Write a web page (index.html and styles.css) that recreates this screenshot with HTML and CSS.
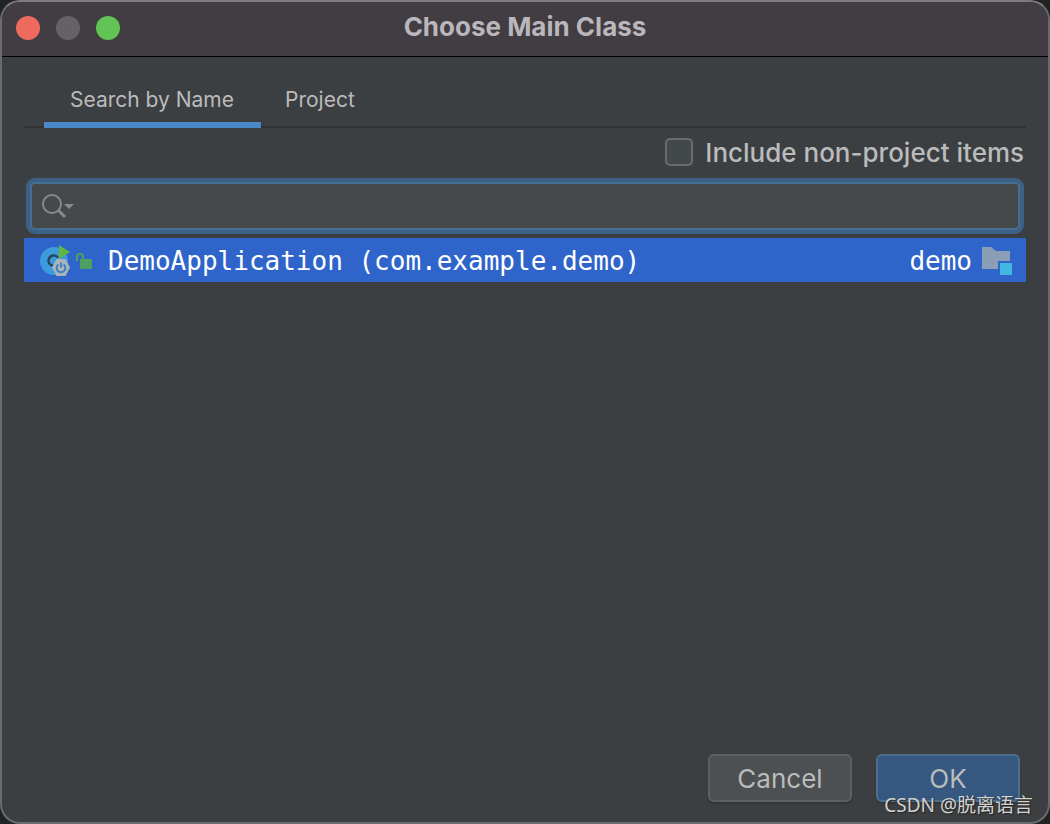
FILE: index.html
```html
<!DOCTYPE html>
<html lang="en">
<head>
  <meta charset="UTF-8" />
  <meta name="viewport" content="width=device-width, initial-scale=1.0" />
  <title>Choose Main Class</title>
  <link rel="stylesheet" href="styles.css">
</head>
<body>
  <div class="dialog">
    <header class="titlebar">
      <div class="lights">
        <button class="light close" aria-label="Close"></button>
        <button class="light minimize" aria-label="Minimize" disabled></button>
        <button class="light maximize" aria-label="Zoom"></button>
      </div>
      <h1>Choose Main Class</h1>
    </header>

    <main class="content">
      <nav class="tabs">
        <a class="tab active" href="#search">Search by Name</a>
        <a class="tab" href="#project">Project</a>
      </nav>

      <div class="options">
        <input type="checkbox" id="nonProject" />
        <label for="nonProject">Include non-project items</label>
      </div>

      <div class="search">
        <svg class="search-icon" width="34" height="26" viewBox="0 0 34 26" aria-hidden="true">
          <circle cx="11" cy="11" r="9" fill="none" stroke="#868a8d" stroke-width="2" />
          <path d="M17.500 17.500L24 24" stroke="#868a8d" stroke-width="3" />
          <path d="M23 11h10l-5 5z" fill="#868a8d" />
        </svg>
        <input type="text" aria-label="Search by name" />
      </div>

      <ul class="results">
        <li class="result selected">
          <!-- runnable Spring class -->
          <svg width="32" height="32" viewBox="0 0 32 32" aria-hidden="true">
            <circle cx="14" cy="16" r="14" fill="#3c9bdc" />
            <path d="M18 12.500A5.300 5.300 0 1 0 14 21" fill="none" stroke="#26455c" stroke-width="2.400" />
            <path d="M19 0l11 7-11 7z" fill="#62b543" />
            <path d="M16.500 14h9l4.500 8.500-4.500 8.500h-9l-4.500-8.500z" fill="#a9b4bd" />
            <path d="M18.500 19.500a4.300 4.300 0 1 0 5 0M21 17.500v5" fill="none" stroke="#3d82c4" stroke-width="2" />
          </svg>
          <svg class="lock" width="18" height="18" viewBox="0 0 18 18" aria-hidden="true">
            <path d="M2 9V5a3 3 0 0 1 6 0v3" fill="none" stroke="#4f9f62" stroke-width="2" />
            <path d="M5 7h12v10H5z" fill="#4f9f62" />
          </svg>
          <span class="name">DemoApplication (com.example.demo)</span>
          <span class="module">demo</span>
          <svg width="32" height="28" viewBox="0 0 32 28" aria-hidden="true">
            <path d="M0 0h9l5 4h14v10H16v8H0z" fill="#8a9eb8" />
            <path d="M18 16h12v12H18z" fill="#40b6e0" />
          </svg>
        </li>
      </ul>

      <footer class="actions">
        <button class="btn">Cancel</button>
        <button class="btn primary">OK</button>
      </footer>
    </main>
    <span class="watermark">CSDN @脱离语言</span>
  </div>
</body>
</html>
```
FILE: styles.css
```css
* {
  box-sizing: border-box;
}
body {
  margin: 0;
  background: #202224;
  color: #bbbbbb;
  font-family: Inter, 'Noto Sans CJK SC', sans-serif;
}
.dialog {
  position: relative;
  display: flex;
  flex-direction: column;
  min-height: 100vh;
  border: 2px solid #696b6d;
  border-top-color: #7d7b80;
  border-radius: 20px;
  background: #3c3f41;
  overflow: hidden;
}
.titlebar {
  display: grid;
  grid-template-columns: 1fr auto 1fr;
  align-items: center;
  height: 55px;
  padding: 0 14px 2px;
  background: #413d43;
  border-bottom: 1px solid #000;
}
.titlebar h1 {
  margin: 0;
  padding-bottom: 2px;
  font-size: 26px;
  line-height: 32px;
  font-weight: 700;
  color: #b9b6bc;
}
.lights {
  display: flex;
  gap: 16px;
}
.light {
  width: 24px;
  height: 24px;
  padding: 0;
  border: none;
  border-radius: 50%;
}
.close {
  background: #ee6a5f;
}
.minimize {
  background: #646167;
}
.maximize {
  background: #61c454;
}
.content {
  display: flex;
  flex: 1;
  flex-direction: column;
  padding: 17px 22px 20px;
}
.tabs {
  display: flex;
  padding-left: 20px;
  border-bottom: 2px solid #323232;
}
.tab {
  height: 54px;
  margin-bottom: -2px;
  padding: 0 24px;
  border-bottom: 6px solid transparent;
  color: #bbbbbb;
  font-size: 21px;
  line-height: 52px;
  text-decoration: none;
}
.tab.active {
  padding: 0 27px 0 26px;
  border-bottom-color: #4a88c7;
}
.options {
  display: flex;
  align-items: center;
  justify-content: flex-end;
  gap: 12px;
  height: 48px;
  padding-right: 2px;
  font-size: 26px;
  font-weight: 500;
}
.options input {
  appearance: none;
  width: 28px;
  height: 28px;
  margin: 0;
  border: 2px solid #6b6b6b;
  border-radius: 5px;
  background: #43494a;
}
.search {
  display: flex;
  align-items: center;
  height: 48px;
  margin: 6px 6px 8px;
  padding-left: 9px;
  border: 2px solid #466d94;
  border-radius: 5px;
  background: #45494a;
  box-shadow: 0 0 0 4px #3d6185;
}
.search input {
  flex: 1;
  height: 40px;
  border: none;
  outline: none;
  background: transparent;
  color: #bbbbbb;
  font: inherit;
  font-size: 26px;
}
.results {
  flex: 1;
  margin: 0;
  padding: 0;
  list-style: none;
}
.result {
  display: flex;
  align-items: center;
  height: 44px;
  padding: 2px 12px 0 16px;
  font-family: 'DejaVu Sans Mono', monospace;
  font-size: 26px;
}
.result.selected {
  background: #2f65ca;
  color: #fff;
}
.lock {
  margin: 0 15px 0 3px;
}
.module {
  margin: 0 10px 0 auto;
}
.actions {
  display: flex;
  justify-content: flex-end;
  gap: 24px;
  padding-right: 6px;
}
.btn {
  width: 144px;
  height: 48px;
  border: 2px solid #5e6060;
  border-radius: 6px;
  background: #4c5052;
  color: #bbbbbb;
  font-family: inherit;
  font-size: 26px;
  box-shadow: 0 2px 2px rgba(0, 0, 0, 0.15);
}
.btn.primary {
  border-color: #4c708c;
  background: #365880;
}
.watermark {
  position: absolute;
  right: 15px;
  bottom: 4px;
  font-family: 'Noto Sans', 'Noto Sans CJK SC', sans-serif;
  font-size: 19px;
  line-height: 26px;
  color: #d2d2d2;
  text-shadow: 1px 1px 1px #222;
}
```
